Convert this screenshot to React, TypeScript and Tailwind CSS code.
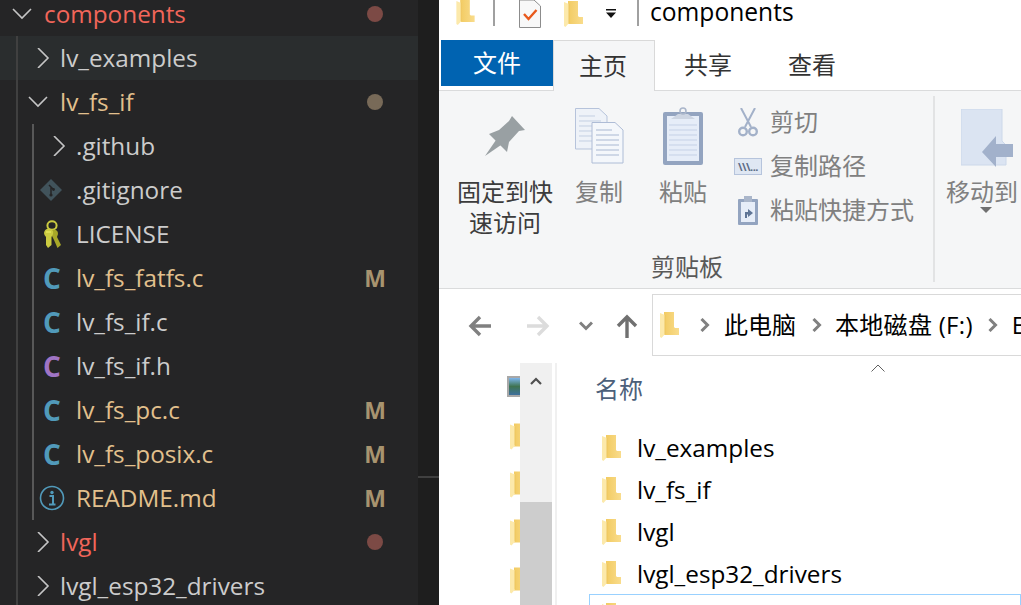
import { ReactNode } from "react";

const treeFont = { fontFamily: '"Open Sans", "Liberation Sans", sans-serif' };

function Chevron({ open }: { open?: boolean }) {
  return (
    <svg width="20" height="20" viewBox="0 0 20 20" fill="none" stroke="#c5c5c5" strokeWidth="1.6">
      {open ? <path d="M1 5 L10 14 L19 5" /> : <path d="M5 0 L15 10 L5 20" />}
    </svg>
  );
}

function FileC({ color = "#519aba" }: { color?: string }) {
  return <span className="-ml-[1px] text-[28px] font-bold leading-none" style={{ color }}>C</span>;
}

function GitIcon() {
  return (
    <svg width="22" height="22" viewBox="0 0 22 22">
      <path d="M11 0 L22 11 L11 22 L0 11 Z" fill="#41535b" />
      <path d="M9 6 L13 10 M11 8 V16" stroke="#252526" strokeWidth="1.5" fill="none" />
      <circle cx="11" cy="16" r="1.6" fill="#252526" />
      <circle cx="13.5" cy="10.5" r="1.4" fill="#252526" />
    </svg>
  );
}

function KeyIcon() {
  return (
    <svg width="18" height="28" viewBox="0 0 18 28">
      <ellipse cx="9" cy="5.5" rx="4.6" ry="4.2" fill="none" stroke="#cbcb41" strokeWidth="2" />
      <path d="M9 10 Q15 9 15 14 L14 17 L18 25 L14.5 28 L11 20 L9 16 Z" fill="#a8a828" />
      <path d="M1 13 Q2 8 7 9 Q11 10 10 14 L8.5 17 V25 L5 28 L3 25 V17 Q1 15 1 13 Z" fill="#cbcb41" />
      <path d="M3 12 H8" stroke="#e6e65a" strokeWidth="1.5" />
    </svg>
  );
}

function InfoIcon() {
  return (
    <svg width="26" height="26" viewBox="0 0 26 26" fill="none">
      <circle cx="13" cy="13" r="11.5" stroke="#519aba" strokeWidth="1.6" />
      <path d="M10.5 11 H14 V19 M10 19.5 H16.5" stroke="#519aba" strokeWidth="2" />
      <circle cx="13" cy="7.5" r="1.7" fill="#519aba" />
    </svg>
  );
}

type RowProps = {
  depth: "a" | "b" | "c";
  chevron?: "open" | "closed";
  icon?: ReactNode;
  label: string;
  tone?: string;
  status?: "M" | "red" | "tan";
  hover?: boolean;
};

function TreeRow({ depth, chevron, icon, label, tone = "text-[#cccccc]", status, hover }: RowProps) {
  const indent = depth === "a" ? "pl-[12px]" : depth === "b" ? "pl-[28px]" : "pl-[44px]";
  return (
    <div className={`flex h-[44px] items-center ${indent} ${hover ? "bg-[#2a2d2e]" : ""}`}>
      <div className={`flex w-[32px] shrink-0 items-center ${chevron === "closed" && depth !== "a" ? "pl-[5px]" : ""}`}>
        {chevron ? <Chevron open={chevron === "open"} /> : icon}
      </div>
      <span className={`flex-1 text-[24.3px] leading-none ${tone}`}>{label}</span>
      <div className="mr-[31px] flex w-[24px] justify-center">
        {status === "M" && <span className="text-[23px] font-bold leading-none text-[#a8946f]">M</span>}
        {status === "red" && <span className="h-[16px] w-[16px] rounded-full bg-[#7c4a45]" />}
        {status === "tan" && <span className="h-[16px] w-[16px] rounded-full bg-[#786a58]" />}
      </div>
    </div>
  );
}

function Explorer() {
  const modified = "text-[#e2c08d]";
  const deleted = "text-[#f1665a]";
  return (
    <aside className="-mt-[8px] w-[418px] shrink-0 bg-[#252526]" style={treeFont}>
      <TreeRow depth="a" chevron="open" label="components" tone={deleted} status="red" />
      <div className="relative">
        <div className="absolute bottom-0 left-[16px] top-0 w-[2px] bg-[#404040]" />
        <TreeRow depth="b" chevron="closed" label="lv_examples" hover />
        <TreeRow depth="b" chevron="open" label="lv_fs_if" tone={modified} status="tan" />
        <div className="relative">
          <div className="absolute bottom-0 left-[32px] top-0 w-[2px] bg-[#585858]" />
          <TreeRow depth="c" chevron="closed" label=".github" />
          <TreeRow depth="c" icon={<span className="-ml-[4px]"><GitIcon /></span>} label=".gitignore" />
          <TreeRow depth="c" icon={<span className="-ml-[1px]"><KeyIcon /></span>} label="LICENSE" />
          <TreeRow depth="c" icon={<FileC />} label="lv_fs_fatfs.c" tone={modified} status="M" />
          <TreeRow depth="c" icon={<FileC />} label="lv_fs_if.c" />
          <TreeRow depth="c" icon={<FileC color="#a074c4" />} label="lv_fs_if.h" />
          <TreeRow depth="c" icon={<FileC />} label="lv_fs_pc.c" tone={modified} status="M" />
          <TreeRow depth="c" icon={<FileC />} label="lv_fs_posix.c" tone={modified} status="M" />
          <TreeRow depth="c" icon={<span className="-ml-[5px]"><InfoIcon /></span>} label="README.md" tone={modified} status="M" />
        </div>
        <TreeRow depth="b" chevron="closed" label="lvgl" tone={deleted} status="red" />
        <TreeRow depth="b" chevron="closed" label="lvgl_esp32_drivers" />
      </div>
    </aside>
  );
}

function Folder({ w = 19, h = 26 }: { w?: number; h?: number }) {
  return (
    <svg width={w} height={h} viewBox="0 0 19 26" className="shrink-0">
      <defs>
        <linearGradient id="folderBody" x1="0" x2="1" y1="0" y2="0">
          <stop offset="0" stopColor="#f2cb62" />
          <stop offset="1" stopColor="#f9dc8c" />
        </linearGradient>
      </defs>
      <path d="M4 0 H14 V15 L15 16 H19 V23 H4 Z" fill="url(#folderBody)" />
      <path d="M0 1 L5 3 V22 L1.5 26 L0 25 Z" fill="#fce9ab" />
      <path d="M5 3 V22" stroke="#edc55e" strokeWidth="1" />
    </svg>
  );
}

function Pin() {
  return (
    <svg width="40" height="40" viewBox="0 0 40 40" fill="#99a0a3">
      <path d="M27 0 L40 14 L34 15 L24 26 L22 36 L4 18 L14 14 L24 5 Z" />
      <path d="M0 40 L11 24 L16 29 Z" />
    </svg>
  );
}

function CopyIcon() {
  return (
    <svg width="49" height="56" viewBox="0 0 49 56">
      <path d="M.5.5 H24 L32 8 V41 H.5 Z" fill="#eef2f8" stroke="#b6c3db" />
      <path d="M4 8 H20 M4 13 H26 M4 18 H26 M4 23 H26 M4 28 H26 M4 33 H26" stroke="#c3cfe2" />
      <path d="M17 14.5 H40 L48 22 V55 H17 Z" fill="#f4f7fb" stroke="#aebcd6" />
      <path d="M21 22 H37 M21 27 H44 M21 32 H44 M21 37 H44 M21 42 H44 M21 47 H44" stroke="#a9b8d2" />
    </svg>
  );
}

function PasteIcon() {
  return (
    <svg width="40" height="58" viewBox="0 0 40 58">
      <rect x="0" y="5" width="40" height="53" rx="2" fill="#93a4c0" />
      <rect x="4" y="9" width="32" height="45" fill="#e6edf8" />
      <path d="M6 18 H34 M6 23 H34 M6 28 H34 M6 33 H34 M6 38 H34 M6 43 H34 M6 48 H34" stroke="#c5d1e6" />
      <path d="M8 12 L15 7 H25 L32 12 Z" fill="#cdd5e2" />
      <circle cx="20" cy="4" r="3" fill="none" stroke="#aab6ca" strokeWidth="1.6" />
    </svg>
  );
}

function Scissors() {
  return (
    <svg width="20" height="29" viewBox="0 0 20 29" fill="none" stroke="#a3b1c9" strokeWidth="2">
      <path d="M3 0 L13 19 M17 0 L7 19" />
      <circle cx="5" cy="23.5" r="3.8" strokeWidth="2.4" />
      <circle cx="15" cy="23.5" r="3.8" strokeWidth="2.4" />
    </svg>
  );
}

function PathIcon() {
  return (
    <div className="flex h-[17px] w-[28px] items-center justify-center border border-[#b6c4dc] bg-[#dfe7f3] text-[11px] font-bold leading-none tracking-[-0.5px] text-[#5c6b85]">
      \\\...
    </div>
  );
}

function ShortcutIcon() {
  return (
    <svg width="20" height="29" viewBox="0 0 20 29">
      <rect x="0" y="3" width="20" height="26" rx="1" fill="#93a4c0" />
      <rect x="3" y="6" width="14" height="20" fill="#e6edf8" />
      <rect x="6" y="0" width="8" height="6" fill="#aab6ca" />
      <path d="M7 22 V16 H10 V13 L15 17 L10 21 V18.5 H9 V22 Z" fill="#5f7596" />
    </svg>
  );
}

function MoveIcon() {
  return (
    <svg width="53" height="58" viewBox="0 0 53 58">
      <path d="M0 0 H41 V32 L45 36 V56 H0 Z" fill="#dbe4f2" stroke="#ccd8ea" />
      <path d="M21 43 L35 27 V35 H52 V48 H35 V58 Z" fill="#a2b1cb" />
    </svg>
  );
}

function LargeButton({ icon, label, width, dim }: { icon: ReactNode; label: ReactNode; width: string; dim?: boolean }) {
  return (
    <div className={`flex shrink-0 flex-col items-center ${width}`}>
      <div className="flex h-[59px] items-center justify-center">{icon}</div>
      <div className={`mt-[11px] text-center text-[24px] leading-[31px] ${dim ? "text-[#808080]" : "text-[#3c3c3c]"}`}>{label}</div>
    </div>
  );
}

function SmallButton({ icon, label }: { icon: ReactNode; label: string }) {
  return (
    <div className="flex h-[44px] items-center">
      <div className="flex w-[37px] shrink-0 justify-center pr-[7px]">{icon}</div>
      <span className="text-[24px] leading-none text-[#808080]">{label}</span>
    </div>
  );
}

function ArrowBtn({ d, color, w }: { d: string; color: string; w: string }) {
  return (
    <div className={`flex shrink-0 justify-center ${w}`}>
      <svg width="24" height="24" viewBox="0 0 24 24" fill="none" stroke={color} strokeWidth="3.4">
        <path d={d} />
      </svg>
    </div>
  );
}

function Crumb({ gap }: { gap: string }) {
  return (
    <svg width="10" height="14" viewBox="0 0 10 14" fill="none" stroke="#808080" strokeWidth="3" className={`shrink-0 ${gap}`}>
      <path d="M1.5 1 L7.5 7 L1.5 13" />
    </svg>
  );
}

function FileRow({ name }: { name: string }) {
  return (
    <div className="flex h-[42px] shrink-0 items-center pl-[13px]">
      <Folder />
      <span className="ml-[16px] text-[24.3px] leading-none text-black">{name}</span>
    </div>
  );
}

function FileWindow() {
  return (
    <main
      className="flex h-[605px] min-w-0 flex-1 flex-col overflow-hidden bg-white"
      style={{ fontFamily: '"Open Sans", "Noto Sans CJK SC", sans-serif' }}
    >
      {/* quick access */}
      <div className="flex h-[40px] shrink-0 items-start pl-[17px]">
        <Folder w={19} h={25} />
        <div className="ml-[18px] h-[26px] w-[2px] bg-[#a0a0a0]" />
        <svg width="22" height="28" viewBox="0 0 22 28" className="ml-[24px]">
          <path d="M.5 0 H15 L21.5 6 V27.5 H.5 Z" fill="#f8f8f8" stroke="#8c8c8c" />
          <path d="M5 14 L9.5 19 L17.5 10" fill="none" stroke="#e8591c" strokeWidth="2.4" />
        </svg>
        <div className="ml-[23px]"><Folder w={19} h={28} /></div>
        <svg width="12" height="10" viewBox="0 0 12 10" className="ml-[22px] mt-[9px]">
          <path d="M1 0 H11 V1.5 H1 Z M1 3.5 H11 L6 9 Z" fill="#111" />
        </svg>
        <div className="ml-[20px] h-[26px] w-[2px] bg-[#a0a0a0]" />
        <span className="ml-[11px] text-[24.6px] leading-[24px] text-black">components</span>
      </div>

      {/* tabs */}
      <div className="flex h-[50px] shrink-0 pl-[2px] text-[24px] leading-none">
        <div className="flex h-[46px] w-[112px] items-center justify-center bg-[#0063b1] text-white">文件</div>
        <div className="z-10 flex h-[51px] w-[102px] items-center justify-center border-x border-t border-[#d9d9d9] bg-[#f5f6f7] pb-[1px] pr-[2px] text-[#333333]">主页</div>
        <div className="ml-[29px] flex h-[50px] items-center text-[#333333]">共享</div>
        <div className="ml-[56px] flex h-[50px] items-center text-[#333333]">查看</div>
      </div>

      {/* ribbon */}
      <div className="flex h-[199px] shrink-0 border-y border-[#dadbdc] bg-[#f5f6f7]">
        <div className="flex w-[494px] shrink-0 flex-col pl-[14px] pr-[12px]">
          <div className="flex h-[155px] pt-[15px]">
            <LargeButton width="w-[104px]" icon={<Pin />} label={<>固定到快<br />速访问</>} />
            <LargeButton width="w-[84px]" dim icon={<CopyIcon />} label="复制" />
            <LargeButton width="w-[84px]" dim icon={<PasteIcon />} label="粘贴" />
            <div className="ml-[8px] -mt-[6px] flex flex-col">
              <SmallButton icon={<Scissors />} label="剪切" />
              <SmallButton icon={<PathIcon />} label="复制路径" />
              <SmallButton icon={<ShortcutIcon />} label="粘贴快捷方式" />
            </div>
          </div>
          <div className="mt-[9px] text-center text-[24px] leading-none text-[#595959]">剪贴板</div>
        </div>
        <div className="mt-[5px] h-[186px] w-[2px] shrink-0 bg-[#e2e3e4]" />
        <div className="flex flex-1 flex-col pl-[11px] pt-[15px]">
          <div className="flex h-[59px] items-center pl-[15px] pt-[4px]"><MoveIcon /></div>
          <div className="mt-[11px] whitespace-nowrap text-[24px] leading-[31px] text-[#808080]">移动到</div>
          <svg width="12" height="6" viewBox="0 0 12 6" className="ml-[34px]"><path d="M0 0 H12 L6 6 Z" fill="#707070" /></svg>
        </div>
      </div>

      {/* address bar */}
      <div className="flex h-[74px] shrink-0 items-center">
        <ArrowBtn w="w-[82px]" d="M23 12 H3 M12 3 L3 12 L12 21" color="#808080" />
        <ArrowBtn w="w-[34px]" d="M1 12 H21 M12 3 L21 12 L12 21" color="#dcdcdc" />
        <div className="ml-[14px] flex w-[34px] justify-center">
          <svg width="14" height="10" viewBox="0 0 14 10" fill="none" stroke="#808080" strokeWidth="3"><path d="M1 1.5 L7 7.5 L13 1.5" /></svg>
        </div>
        <ArrowBtn w="w-[34px] ml-[7px]" d="M12 24 V3 M3 12 L12 3 L21 12" color="#707070" />
        <div className="-mt-[2px] ml-[8px] flex h-[62px] flex-1 items-center overflow-hidden whitespace-nowrap border-y border-l border-[#d9d9d9] pl-[7px] text-[24px] leading-none text-black">
          <Folder />
          <Crumb gap="ml-[21px] mr-[14px]" />
          <span>此电脑</span>
          <Crumb gap="ml-[16px] mr-[13px]" />
          <span className="tracking-[0.3px]">本地磁盘 (F:)</span>
          <Crumb gap="ml-[15px] mr-[14px]" />
          <span>E</span>
        </div>
      </div>

      {/* nav + list */}
      <div className="flex min-h-0 flex-1">
        <div className="flex w-[81px] shrink-0 flex-col items-end overflow-hidden pt-[13px]">
          <div className="h-[21px] w-[13px] border-y-2 border-l-2 border-[#a8a8a8] bg-gradient-to-b from-[#7fb5ee] via-[#3f7350] to-[#3f6f9c]" />
          <div className="mt-[26px] flex w-[10px] flex-col gap-[21px] overflow-hidden">
            {[0, 1, 2, 3].map((i) => (
              <div key={i} className="h-[27px] w-[10px] overflow-hidden"><Folder w={19} h={27} /></div>
            ))}
          </div>
        </div>
        <div className="flex w-[32px] shrink-0 flex-col bg-[#f0f0f0]">
          <div className="flex h-[139px] justify-center pt-[14px]">
            <svg width="12" height="8" viewBox="0 0 12 8" fill="none" stroke="#505050" strokeWidth="2.2"><path d="M1 7 L6 2 L11 7" /></svg>
          </div>
          <div className="flex-1 bg-[#cdcdcd]" />
        </div>
        <div className="ml-[3px] w-[2px] shrink-0 bg-[#f0f0f0]" />
        <div className="flex min-w-0 flex-1 flex-col pl-[32px]">
          <div className="flex h-[64px] shrink-0 pl-[6px]">
            <span className="pt-[14px] text-[24px] leading-none text-[#4c607a]">名称</span>
            <svg width="14" height="8" viewBox="0 0 14 8" fill="none" stroke="#606060" className="ml-[228px] mt-[1px] shrink-0"><path d="M.5 7.5 L7 1 L13.5 7.5" /></svg>
          </div>
          <FileRow name="lv_examples" />
          <FileRow name="lv_fs_if" />
          <FileRow name="lvgl" />
          <FileRow name="lvgl_esp32_drivers" />
          <div className="-mt-[1px] flex h-[40px] shrink-0 border border-[#99d1ff] pl-[12px] pt-[8px]">
            <Folder />
          </div>
        </div>
      </div>
    </main>
  );
}

export default function App() {
  return (
    <div className="flex h-[605px] w-[1021px] overflow-hidden bg-[#1e1e1e]">
      <Explorer />
      <div className="w-[21px] shrink-0">
        <div className="mt-[476px] h-[2px] bg-[#404040]" />
      </div>
      <FileWindow />
    </div>
  );
}
